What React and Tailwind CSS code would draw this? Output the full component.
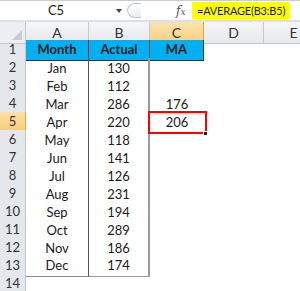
import React from 'react';

const rows = [
  ['Jan', 130, null],
  ['Feb', 112, null],
  ['Mar', 286, 176],
  ['Apr', 220, 206],
  ['May', 118, null],
  ['Jun', 141, null],
  ['Jul', 126, null],
  ['Aug', 231, null],
  ['Sep', 194, null],
  ['Oct', 289, null],
  ['Nov', 186, null],
  ['Dec', 174, null],
];

const cols = ['A', 'B', 'C', 'D', 'E'];
const grid = 'grid grid-cols-[26px_63px_61px_54px_60px_60px] h-[18px]';

function RowHead({ n, active }) {
  return (
    <div
      className={`flex items-center justify-center text-[13px] text-[#333] border-r border-b ${
        active
          ? 'bg-gradient-to-b from-[#fbe0a6] to-[#f6cb74] border-[#e3a93f]'
          : 'bg-[#e4e8ed] border-[#c4c8cd]'
      }`}
    >
      {n}
    </div>
  );
}

export default function App() {
  return (
    <div className="w-[300px] h-[291px] overflow-hidden bg-white font-['Lato',sans-serif] text-[#1a1a1a]">
      {/* Formula bar */}
      <div className="flex items-center h-[20px] border-t border-[#c9cdd2] bg-white">
        <div className="w-[112px] shrink-0 text-center text-[13px] leading-none">C5</div>
        <div className="w-[14px] shrink-0 flex justify-center">
          <svg width="6" height="4" viewBox="0 0 6 4">
            <path d="M0 0h6L3 4z" fill="#444" />
          </svg>
        </div>
        <div className="w-[14px] h-[15px] shrink-0 ml-[1px] rounded-l-full border-l border-y border-[#c3c7cc] bg-gradient-to-b from-white to-[#e9ecef]" />
        <div className="w-[35px] shrink-0" />
        <div className="w-[14px] shrink-0 mr-[2px] font-['DejaVu_Serif',serif] italic text-[12px] text-[#555] leading-none">
          f<span className="text-[9px]">x</span>
        </div>
        <div className="w-[98px] h-[17px] shrink-0 overflow-hidden whitespace-nowrap bg-[#ffff00] flex items-center pl-[5px] text-[11px] tracking-[-0.2px] leading-none">
          =AVERAGE(B3:B5)
        </div>
        <div className="flex-1" />
      </div>
      <div className="h-[2px] bg-[#dde1e6]" />

      {/* Column headers */}
      <div className={grid}>
        <div className="relative bg-[#eceef1] border-r border-b border-[#c4c8cd]">
          <svg className="absolute right-[3px] bottom-[3px]" width="10" height="10" viewBox="0 0 10 10">
            <path d="M10 0v10H0z" fill="#c9cdd2" />
          </svg>
        </div>
        {cols.map(c => (
          <div
            key={c}
            className={`flex items-center justify-center text-[14px] text-[#333] border-r border-b ${
              c === 'C'
                ? 'bg-gradient-to-b from-[#fbe2ae] to-[#f8cf7c] border-[#e3a93f]'
                : 'bg-gradient-to-b from-[#f5f6f7] to-[#e6e8ea] border-[#c4c8cd]'
            }`}
          >
            {c}
          </div>
        ))}
      </div>

      {/* Row 1: headings */}
      <div className={grid}>
        <RowHead n={1} />
        <div className="bg-[#00b0f0] border-r border-b border-[#333] flex items-center justify-center font-bold text-[13px]">Month</div>
        <div className="bg-[#00b0f0] border-r border-b border-[#333] flex items-center justify-center font-bold text-[13px]">Actual</div>
        <div className="bg-[#00b0f0] border-r border-b border-[#333] flex items-center justify-center font-bold text-[13px]">MA</div>
        <div />
        <div />
      </div>

      {/* Data rows */}
      {rows.map(([m, v, ma], i) => {
        const n = i + 2;
        const last = n === 13;
        return (
          <div key={m} className={grid}>
            <RowHead n={n} active={n === 5} />
            <div className={`flex items-center justify-center text-[13px] border-r border-[#555] ${last ? 'border-b border-b-[#8a8a8a]' : ''}`}>{m}</div>
            <div className={`flex items-center justify-center text-[13px] border-r-2 border-[#9a9a9a] ${last ? 'border-b' : ''}`}>{v}</div>
            <div className="relative flex items-center justify-center text-[13px]">
              {ma}
              {n === 5 && (
                <>
                  <div className="absolute -left-[2px] -top-[1px] -right-[3px] -bottom-[1px] border-2 border-[#ff0000]" />
                  <div className="absolute -right-[4px] -bottom-[3px] w-[5px] h-[5px] bg-[#222] border border-white" />
                </>
              )}
            </div>
            <div />
            <div />
          </div>
        );
      })}

      <div className={grid}>
        <RowHead n={14} />
      </div>
    </div>
  );
}
